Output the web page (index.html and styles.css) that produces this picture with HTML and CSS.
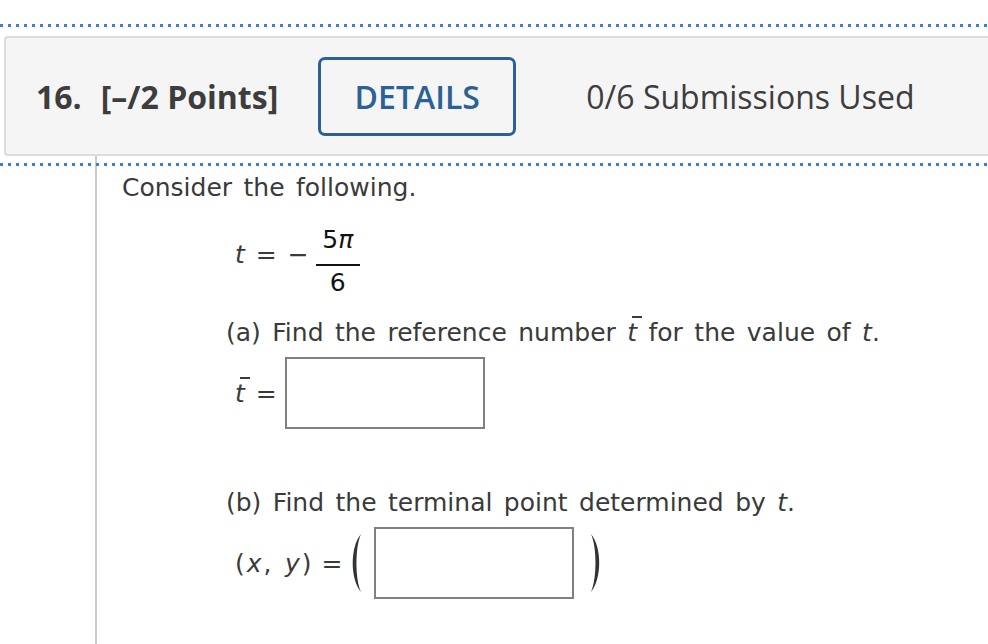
FILE: index.html
```html
<!DOCTYPE html>
<html lang="en">
<head>
<meta charset="utf-8">
<title>Question 16</title>
<link rel="stylesheet" href="styles.css">
</head>
<body>
<div class="q">
  <span class="focus focus-top"></span>
  <span class="focus focus-bottom"></span>
  <div class="head">
    <span class="num">16.</span>
    <span class="pts">[–/2 Points]</span>
    <button class="details" type="button">DETAILS</button>
    <span class="subs">0/6 Submissions Used</span>
  </div>
  <div class="body">
    <p class="intro">Consider the following.</p>
    <div class="indent">
      <div class="math-eq">
        <span class="lhs"><i class="var">t</i><span class="op eq">=</span><span class="op minus">−</span></span>
        <span class="frac"><span class="numr">5<i class="pi">π</i></span><span class="bar"></span><span class="den">6</span></span>
      </div>
      <p class="part">(a) Find the reference number <i class="var tbar">t</i> for the value of <i class="var">t</i>.</p>
      <div class="answer">
        <span class="label"><i class="var tbar">t</i><span class="op eq2">=</span></span>
        <span class="box"></span>
      </div>
      <p class="part part-b">(b) Find the terminal point determined by <i class="var">t</i>.</p>
      <div class="answer">
        <span class="label">(<i class="var xy">x</i>, <i class="var xy">y</i>)<span class="op eq3">=</span></span>
        <svg class="paren lparen" width="16" height="60" viewBox="0 0 16 60"><path d="M14 1 C3 14 3 46 14 59 C8 46 8 14 14 1 Z" fill="#333"/></svg>
        <span class="box box-b"></span>
        <svg class="paren rparen" width="16" height="60" viewBox="0 0 16 60"><path d="M2 1 C13 14 13 46 2 59 C8 46 8 14 2 1 Z" fill="#333"/></svg>
      </div>
    </div>
  </div>
</div>
</body>
</html>
```

FILE: styles.css
```css
html, body {
  margin: 0;
  padding: 0;
  background: #ffffff;
}

.q {
  position: relative;
  margin-top: 36px;
}

.focus {
  position: absolute;
  left: 0;
  right: 0;
  height: 3px;
  background: repeating-linear-gradient(to right, #3b7de0 0 3px, transparent 3px 8px);
}

.focus-top { top: -12px; }
.focus-bottom { top: 127px; z-index: 1; }

.head {
  margin-left: 4px;
  height: 120px;
  box-sizing: border-box;
  border: 2px solid #dcdcdc;
  border-right: none;
  border-radius: 4px 0 0 4px;
  background: #f5f5f5;
  display: flex;
  align-items: center;
  padding-left: 30px;
  font-family: "Open Sans", "Liberation Sans", sans-serif;
  font-size: 32px;
  color: #3d3d3d;
}

.num, .pts {
  font-weight: 700;
}

.pts {
  margin-left: 19px;
}

.details {
  margin-left: 40px;
  width: 198px;
  height: 79px;
  box-sizing: border-box;
  border: 3px solid #2c6196;
  border-radius: 7px;
  background: transparent;
  color: #2c6196;
  font-family: "Open Sans", "Liberation Sans", sans-serif;
  font-size: 32px;
  font-weight: 600;
  padding: 0;
}

.subs {
  margin-left: 70px;
  font-weight: 400;
  white-space: nowrap;
}

.body {
  margin-left: 95px;
  border-left: 2px solid #cccccc;
  padding: 14px 0 60px 25px;
  font-family: "DejaVu Sans", Verdana, sans-serif;
  font-size: 25px;
  line-height: 35px;
  word-spacing: 3.5px;
  color: #3a3a3a;
}

.intro {
  margin: 0;
}

.indent {
  margin-left: 104px;
}

.var {
  font-style: italic;
}

.xy {
  padding: 0 2px;
}

.tbar {
  display: inline-block;
  position: relative;
}

.tbar::before {
  content: "";
  position: absolute;
  left: 5px;
  top: 1px;
  width: 10px;
  height: 2px;
  background: #3a3a3a;
}

.math-eq {
  display: flex;
  align-items: flex-start;
  margin-top: 21px;
  line-height: 28px;
}

.lhs {
  margin-top: 15px;
  margin-left: 9px;
  display: flex;
}

.op.eq {
  margin-left: 11px;
}

.op.minus {
  margin-left: 11px;
}

.frac {
  display: flex;
  flex-direction: column;
  align-items: center;
  margin-left: 7px;
  color: #111;
}

.numr {
  padding: 0 4px;
}

.pi {
  font-style: italic;
}

.bar {
  width: 44px;
  height: 2px;
  margin-top: 10px;
  background: #111;
}

.den {
  margin-top: 3px;
}

.part {
  margin: 18px 0 0;
}

.part-b {
  margin-top: 56px;
}

.answer {
  display: flex;
  align-items: center;
  margin-top: 7px;
}

.label {
  margin-left: 9px;
  white-space: nowrap;
}

.op.eq2 {
  margin-left: 11px;
}

.op.eq3 {
  margin-left: 10px;
}

.box {
  display: block;
  margin-left: 8px;
  width: 200px;
  height: 72px;
  box-sizing: border-box;
  border: 2px solid #808080;
  background: #fff;
}

.paren {
  display: block;
}

.lparen {
  margin-left: 5px;
}

.box-b {
  margin-left: 11px;
}

.rparen {
  margin-left: 15px;
}
```
